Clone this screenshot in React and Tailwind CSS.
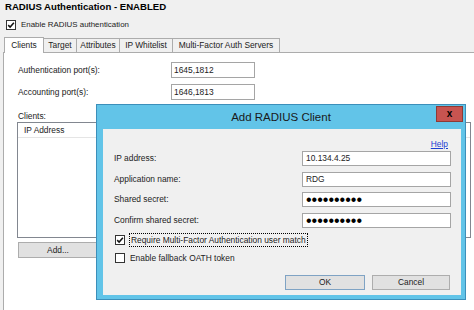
import React from 'react'

function Check({ checked }) {
  return (
    <span className="flex h-[10px] w-[10px] shrink-0 items-center justify-center border border-[#333333] bg-white">
      {checked && (
        <svg viewBox="0 0 10 10" className="h-[8px] w-[8px]">
          <path d="M1.5 5.2 L3.9 7.6 L8.6 2.2" fill="none" stroke="#111" strokeWidth="1.9" />
        </svg>
      )}
    </span>
  )
}

function Tab({ label, width, active }) {
  if (active) {
    return (
      <div
        className="relative z-10 -mb-[1px] flex h-[16px] items-center justify-center border-x border-t border-[#acacac] bg-white"
        style={{ width }}
      >
        {label}
      </div>
    )
  }
  return (
    <div
      className="-ml-[1px] flex h-[14px] items-center justify-center border-x border-t border-[#acacac] bg-[#f0f0f0]"
      style={{ width }}
    >
      {label}
    </div>
  )
}

function PortRow({ label, value, className = '' }) {
  return (
    <div className={`flex h-[16px] items-center ${className}`}>
      <span className="w-[153px]">{label}</span>
      <div className="flex h-[16px] w-[84px] items-center border border-[#a5a5a5] bg-white pl-[2px]">{value}</div>
    </div>
  )
}

function Field({ label, value, secret }) {
  return (
    <div className="flex h-[15px] items-center">
      <span className="w-[188px]">{label}</span>
      <div className="flex h-[15px] w-[149px] items-center border border-[#a5a5a5] bg-white pl-[3px]">
        {secret ? <span className="text-[16px] leading-[13px] text-black">••••••••••</span> : value}
      </div>
    </div>
  )
}

function Button({ label, width, primary }) {
  return (
    <div
      className={`flex h-[15px] items-center justify-center border bg-[#e1e1e1] ${primary ? 'border-[#7fa3c4]' : 'border-[#adadad]'}`}
      style={{ width }}
    >
      {label}
    </div>
  )
}

export default function App() {
  return (
    <div className="relative flex h-[310px] w-[474px] flex-col overflow-hidden bg-[#f0f0f0] font-['Liberation_Sans',Arial,sans-serif] text-[8.4px] text-[#222]">
      <div className="flex h-[15px] items-center pl-[5px] text-[9.6px] font-bold text-black">RADIUS Authentication - ENABLED</div>
      <div className="flex h-[19px] items-center gap-[5px] pl-[6px]">
        <Check checked />
        <span className="text-[7.9px]">Enable RADIUS authentication</span>
      </div>

      <div className="mt-[2px] flex h-[16px] items-end pl-[4px]">
        <Tab label="Clients" width={40} active />
        <Tab label="Target" width={34} />
        <Tab label="Attributes" width={44} />
        <Tab label="IP Whitelist" width={54} />
        <Tab label="Multi-Factor Auth Servers" width={108} />
      </div>

      <div className="ml-[3px] flex-1 border-l border-t border-[#acacac] bg-white pl-[14px] pt-[9px]">
        <PortRow label="Authentication port(s):" value="1645,1812" />
        <PortRow label="Accounting port(s):" value="1646,1813" className="mt-[6px]" />
        <div className="mt-[10px] flex h-[12px] items-center">Clients:</div>
        <div className="-ml-[1px] h-[116px] w-[454px] border border-[#828790] bg-white">
          <div className="flex h-[15px] items-center border-b border-[#e5e5e5] pl-[6px]">IP Address</div>
        </div>
        <div className="mt-[4px] flex h-[16px] w-[80px] items-center justify-center border border-[#adadad] bg-[#e1e1e1]">Add...</div>
      </div>

      <div className="absolute left-[96px] top-[104px] flex h-[196px] w-[370px] flex-col border border-[#3c8fba] bg-[#62c4e8]">
        <div className="flex h-[24px] items-center justify-center pt-[1px] text-[11.5px] text-[#1a1a1a]">Add RADIUS Client</div>
        <div className="absolute left-[339px] top-[1px] flex h-[16px] w-[27px] items-center justify-center border border-[#8e3a36] bg-[#c75450] text-[10px] font-bold leading-none text-black">
          x
        </div>

        <div className="mb-[4px] ml-[6px] mr-[4px] flex h-[166px] flex-col bg-[#f0f0f0] pt-[9px]">
          <div className="flex h-[12px] items-center justify-end pr-[13px] text-[#1c3fd2] underline">Help</div>
          <div className="ml-[11px] mt-[1px] flex flex-col gap-[5.5px]">
            <Field label="IP address:" value="10.134.4.25" />
            <Field label="Application name:" value="RDG" />
            <Field label="Shared secret:" secret />
            <Field label="Confirm shared secret:" secret />
          </div>

          <div className="ml-[12px] mt-[5.5px] flex h-[14px] items-center gap-[4px]">
            <Check checked />
            <span className="flex h-[14px] items-center border border-dotted border-black px-[1px]">
              Require Multi-Factor Authentication user match
            </span>
          </div>
          <div className="ml-[12px] mt-[4px] flex h-[14px] items-center gap-[4px]">
            <Check />
            <span className="flex h-[14px] items-center border border-transparent">Enable fallback OATH token</span>
          </div>

          <div className="mt-[10px] flex justify-end gap-[7px] pr-[11px]">
            <Button label="OK" width={80} primary />
            <Button label="Cancel" width={78} />
          </div>
        </div>
      </div>
    </div>
  )
}
